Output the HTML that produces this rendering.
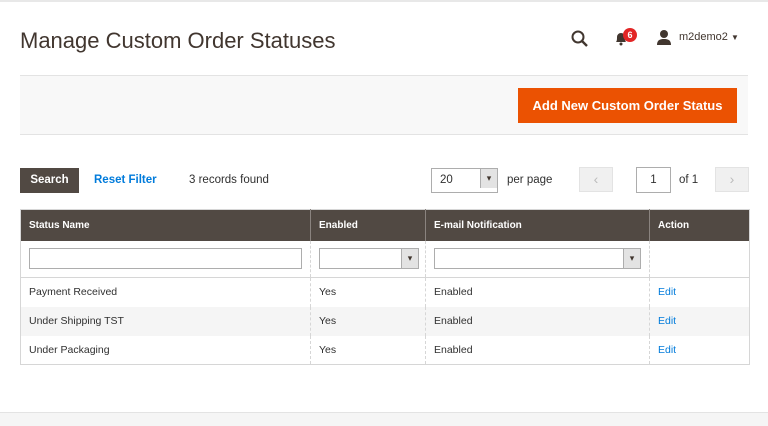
<!DOCTYPE html>
<html><head><style>
*{box-sizing:border-box;margin:0;padding:0}
body{width:768px;height:426px;background:#fff;font-family:"Liberation Sans",sans-serif;color:#303030;position:relative;overflow:hidden;font-size:11px}
.a{position:absolute}
.top{left:0;top:0;width:768px;height:2px;background:#e8e8e8}
h1{position:absolute;left:20px;top:28px;font-size:22px;font-weight:normal;color:#41362f}
.bar{left:20px;top:75px;width:728px;height:60px;background:#f8f8f8;border-top:1px solid #e3e3e3;border-bottom:1px solid #e3e3e3}
.btn{left:518px;top:88px;width:219px;height:35px;background:#eb5202;color:#fff;font-weight:bold;font-size:13px;line-height:35px;text-align:center}
.sb{left:20px;top:168px;width:59px;height:25px;background:#514943;color:#fff;font-weight:bold;line-height:25px;text-align:center;font-size:11.5px}
.box{border:1px solid #adadad;background:#fff}
table{position:absolute;left:20px;top:209px;width:729px;border-collapse:collapse;border:1px solid #d6d6d6;table-layout:fixed}
th{background:#514943;color:#fff;text-align:left;height:31px;padding-left:8px;font-size:10px;border-left:1px solid #8a837f}
td{height:29px;padding-left:8px;border-left:1px dashed #d6d6d6;color:#303030;font-size:10.5px}
tr.f td{height:37px;border-bottom:1px solid #d6d6d6;background:#fff}
tr.g td{background:#f5f5f5}
.e{color:#007bdb}
.sel{position:relative;height:21px;border:1px solid #adadad;background:#fff}
.sel:after{content:"▾";position:absolute;right:0;top:0;width:16px;height:19px;background:#e3e3e3;text-align:center;line-height:19px;font-size:9px;color:#41362f;border-left:1px solid #adadad}
.foot{left:0;top:412px;width:768px;height:14px;background:#f5f5f5;border-top:1px solid #e3e3e3}
</style></head><body>
<div class="a top"></div>
<h1>Manage Custom Order Statuses</h1>
<svg class="a" style="left:571px;top:30px" width="18" height="18" viewBox="0 0 18 18"><circle cx="7" cy="7" r="5.5" fill="none" stroke="#41362f" stroke-width="2"/><path d="M11 11l5 5" stroke="#41362f" stroke-width="2.4"/></svg>
<svg class="a" style="left:614px;top:31px" width="14" height="15" viewBox="0 0 14 15"><path d="M2 11c1-1 1-3 1-5a4 4 0 018 0c0 2 0 4 1 5z" fill="#41362f"/><circle cx="7" cy="13" r="1.5" fill="#41362f"/></svg>
<div class="a" style="left:623px;top:28px;width:14px;height:14px;border-radius:7px;background:#e22626;color:#fff;font-size:9px;font-weight:bold;text-align:center;line-height:14px">6</div>
<svg class="a" style="left:656px;top:29px" width="16" height="16" viewBox="0 0 16 16"><circle cx="8" cy="5" r="4" fill="#41362f"/><path d="M1 16c0-5 3-6 7-6s7 1 7 6z" fill="#41362f"/></svg>
<div class="a" style="left:679px;top:31px;font-size:11px;color:#41362f">m2demo2 <span style="font-size:8px">▼</span></div>
<div class="a bar"></div>
<div class="a btn">Add New Custom Order Status</div>
<div class="a sb">Search</div>
<div class="a" style="left:94px;top:174px;color:#007bdb;font-weight:bold;font-size:11.5px">Reset Filter</div>
<div class="a" style="left:189px;top:174px;font-size:11.5px">3 records found</div>
<div class="a sel" style="left:431px;top:168px;width:67px;height:25px;padding:5px 8px;font-size:11.5px">20</div>
<div class="a" style="left:507px;top:174px;font-size:11.5px">per page</div>
<div class="a" style="left:579px;top:167px;width:34px;height:25px;background:#f0f0f0;border:1px solid #e3e3e3;text-align:center;line-height:22px;color:#bbb;font-size:14px">‹</div>
<div class="a box" style="left:636px;top:167px;width:35px;height:26px;text-align:center;line-height:24px;font-size:11.5px">1</div>
<div class="a" style="left:679px;top:174px;font-size:11.5px">of 1</div>
<div class="a" style="left:715px;top:167px;width:34px;height:25px;background:#f0f0f0;border:1px solid #e3e3e3;text-align:center;line-height:22px;color:#bbb;font-size:14px">›</div>
<table>
<colgroup><col style="width:290px"><col style="width:115px"><col style="width:224px"><col style="width:100px"></colgroup>
<tr><th style="border-left:none">Status Name</th><th>Enabled</th><th>E-mail Notification</th><th>Action</th></tr>
<tr class="f"><td><div class="box" style="width:273px;height:21px;border-color:#adadad"></div></td><td><div class="sel" style="width:100px"></div></td><td><div class="sel" style="width:207px"></div></td><td></td></tr>
<tr><td>Payment Received</td><td>Yes</td><td>Enabled</td><td class="e">Edit</td></tr>
<tr class="g"><td>Under Shipping TST</td><td>Yes</td><td>Enabled</td><td class="e">Edit</td></tr>
<tr><td>Under Packaging</td><td>Yes</td><td>Enabled</td><td class="e">Edit</td></tr>
</table>
<div class="a foot"></div>
</body></html>
